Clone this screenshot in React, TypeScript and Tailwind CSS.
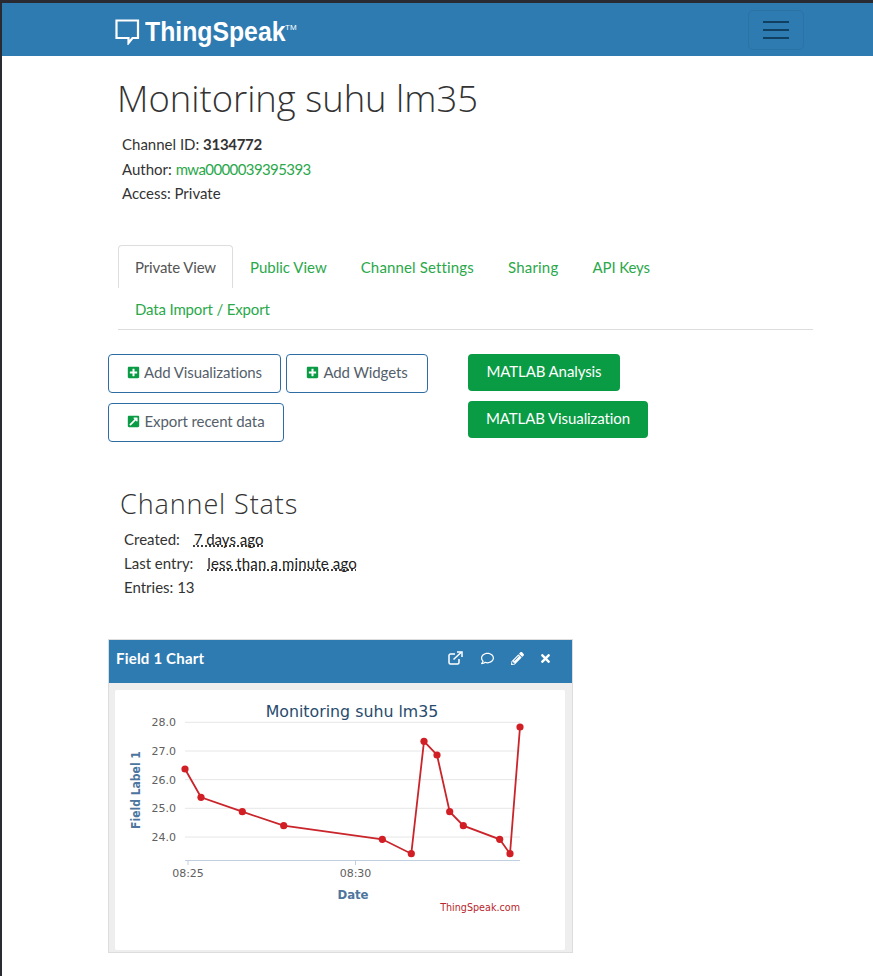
import React from 'react';
import { FaPlusSquare, FaExternalLinkSquareAlt, FaRegComment, FaPencilAlt, FaTimes } from 'react-icons/fa';

const body = "font-['Lato','Noto_Sans',sans-serif]";
const heading = "font-['Open_Sans','Lato',sans-serif]";

const points = [
  [70, 79], [86, 107.3], [127.3, 121.7], [168.7, 135.7], [267.3, 149.3], [296.3, 163.7],
  [309, 51.3], [322, 65], [334.7, 121.7], [348.3, 135.7], [384.7, 149.3], [395, 163.7], [405, 37],
];

const Logo = () => (
  <svg width="25" height="26" viewBox="0 0 25 26" fill="none" stroke="white" strokeWidth="2.2">
    <path d="M1.5 1.5 H23 V19 H17.5 L13.5 24 V19 H1.5 Z" />
  </svg>
);

const Chart = () => (
  <svg width="450" height="260" viewBox="0 0 450 260">
    {[32.3, 61, 89.7, 118.3, 147].map(y => (
      <line key={y} x1="70" x2="405" y1={y} y2={y} stroke="#e6e6e6" />
    ))}
    <line x1="70" x2="405" y1="170.5" y2="170.5" stroke="#c0d0e0" />
    <line x1="73" x2="73" y1="170" y2="175" stroke="#c0d0e0" />
    <line x1="240.5" x2="240.5" y1="170" y2="175" stroke="#c0d0e0" />
    <g fontFamily="'DejaVu Sans', sans-serif">
      <text x="237" y="27" textAnchor="middle" fontSize="15.8" fill="#274b6d">Monitoring suhu lm35</text>
      {['28.0', '27.0', '26.0', '25.0', '24.0'].map((t, i) => (
        <text key={t} x="61" y={[36, 65, 94, 122, 151][i]} textAnchor="end" fontSize="11" fill="#606060">{t}</text>
      ))}
      <text x="73" y="187" textAnchor="middle" fontSize="11" fill="#606060">08:25</text>
      <text x="240.5" y="187" textAnchor="middle" fontSize="11" fill="#606060">08:30</text>
      <text x="405" y="221" textAnchor="end" fontSize="9.6" fill="#b8262c">ThingSpeak.com</text>
      <text x="238" y="209" textAnchor="middle" fontSize="13" fontWeight="700" fill="#4d759e" fontFamily="'DejaVu Sans Condensed', 'DejaVu Sans', sans-serif">Date</text>
      <text transform="translate(25 100) rotate(-90)" textAnchor="middle" fontSize="12" fontWeight="700" fill="#4d759e" fontFamily="'DejaVu Sans Condensed', 'DejaVu Sans', sans-serif">Field Label 1</text>
    </g>
    <polyline points={points.map(p => p.join(',')).join(' ')} fill="none" stroke="#c9252b" strokeWidth="1.8" />
    {points.map(([x, y], i) => <circle key={i} cx={x} cy={y} r="3.6" fill="#d11f25" />)}
  </svg>
);

// fa4 external-link, the fa5 set only has the solid one
const ExternalLink = () => (
  <svg className="mr-[3px]" width="15" height="14" viewBox="0 0 15 14" fill="none" stroke="white" strokeWidth="1.5">
    <path d="M11 8 V11.5 A1.5 1.5 0 0 1 9.5 13 H2.5 A1.5 1.5 0 0 1 1 11.5 V4.5 A1.5 1.5 0 0 1 2.5 3 H7" />
    <path d="M5.5 8.5 L13 1.5" />
    <path d="M9 1 H14 V6" />
  </svg>
);

const OutlineBtn = ({ icon, label, className }: { icon: React.ReactNode; label: string; className: string }) => (
  <button className={`h-[39px] pb-[1px] flex items-center justify-center gap-[4px] border border-[#2e6da4] rounded-[4px] text-[#555f6b] text-[15px] tracking-[-0.1px] font-['Lato',sans-serif] ${className}`}>
    <span className="text-[#0a9b45] text-[13px]">{icon}</span>{label}
  </button>
);

const GreenBtn = ({ label, className }: { label: string; className: string }) => (
  <button className={`h-[37px] pb-[1px] flex items-center justify-center bg-[#0a9b45] rounded-[4px] text-white text-[15px] tracking-[-0.1px] font-['Lato',sans-serif] ${className}`}>{label}</button>
);

const Tab = ({ label, className = '' }: { label: string; className?: string }) => (
  <a className={`h-[43px] pt-[2px] px-[17px] flex items-center text-[#2aa84a] text-[15px] ${className}`}>{label}</a>
);

export default function App() {
  return (
    <div className={`min-h-[976px] bg-white border-l-2 border-t-[3px] border-[#2a2a33] overflow-hidden ${body}`}>
      <nav className="h-[53px] bg-[#2e7bb2] flex items-center justify-between pl-[113px] pr-[69px]">
        <div className="flex items-center text-white pt-[5px]">
          <Logo />
          <span className="ml-[5px] inline-block w-[139px] origin-left scale-x-[0.885] font-['Liberation_Sans',sans-serif] font-bold text-[28px] leading-[30px] whitespace-nowrap -mt-[1px] mr-[17px]">ThingSpeak</span>
          <span className="-ml-[16px] text-[8px] -mt-[8px] font-['Liberation_Sans',sans-serif]">TM</span>
        </div>
        <button className="w-[56px] h-[40px] rounded-[5px] border border-[#2b72a5] flex flex-col items-center justify-center gap-[6px]">
          <span className="w-[26px] h-[2px] bg-[#103f60]" />
          <span className="w-[26px] h-[2px] bg-[#103f60]" />
          <span className="w-[26px] h-[2px] bg-[#103f60]" />
        </button>
      </nav>

      <main className="pl-[106px] text-[#333]">
        <div className="pl-[9px] pt-[19px]">
          <h1 className={`text-[36.4px] leading-[46px] font-light text-[#333] ${heading}`}>Monitoring suhu lm35</h1>
          <div className="mt-[11px] pl-[5px] text-[15px] leading-[24.5px]">
            <p>Channel ID: <b className="tracking-[-0.3px]">3134772</b></p>
            <p>Author: <a className="text-[#2aa84a] tracking-[-0.6px]">mwa0000039395393</a></p>
            <p>Access: Private</p>
          </div>
        </div>

        <div className="ml-[10px] mt-[39px] w-[695px] border-b border-[#ddd] flex flex-wrap box-content">
          <a className="px-[16px] h-[43px] pt-[2px] flex items-center text-[#555] text-[15px] tracking-[-0.15px] border border-b-0 border-[#ddd] rounded-t-[4px]">Private View</a>
          <Tab label="Public View" />
          <Tab label="Channel Settings" className="tracking-[0.15px]" />
          <Tab label="Sharing" className="tracking-[0.2px]" />
          <Tab label="API Keys" className="tracking-[-0.1px]" />
          <div className="w-full" />
          <Tab label="Data Import / Export" className="!h-[41px] tracking-[-0.15px]" />
        </div>

        <div className="mt-[24px] flex">
          <div className="w-[360px] flex flex-wrap gap-x-[5px] gap-y-[10px] content-start">
            <OutlineBtn icon={<FaPlusSquare />} label="Add Visualizations" className="w-[173px]" />
            <OutlineBtn icon={<FaPlusSquare />} label="Add Widgets" className="w-[142px]" />
            <OutlineBtn icon={<FaExternalLinkSquareAlt />} label="Export recent data" className="w-[176px]" />
          </div>
          <div className="flex flex-col gap-[10px] items-start">
            <GreenBtn label="MATLAB Analysis" className="w-[152px]" />
            <GreenBtn label="MATLAB Visualization" className="w-[180px]" />
          </div>
        </div>

        <div className="mt-[46px] pl-[12px]">
          <h2 className={`text-[27px] leading-[32px] tracking-[0.9px] font-light text-[#333] ${heading}`}>Channel Stats</h2>
          <div className="mt-[7px] pl-[4px] text-[15px] leading-[24px]">
            <p>Created: <span className="ml-[10px] underline decoration-dotted decoration-black [text-decoration-skip-ink:none] text-[#222]">7 days ago</span></p>
            <p>Last entry: <span className="ml-[10px] underline decoration-dotted decoration-black [text-decoration-skip-ink:none] text-[#222] tracking-[0.15px]">less than a minute ago</span></p>
            <p>Entries: 13</p>
          </div>
        </div>

        <section className="mt-[40px] w-[465px] h-[314px] border border-[#ddd] bg-[#eeeeee]">
          <header className="h-[43px] pb-[6px] bg-[#2e7bb2] flex items-center justify-between pl-[7px] pr-[20px] text-white">
            <span className="font-bold text-[15px] tracking-[0.2px]">Field 1 Chart</span>
            <div className="flex items-center gap-[15px] text-[13px]">
              <ExternalLink />
              <FaRegComment className="mr-[2px]" />
              <FaPencilAlt />
              <FaTimes />
            </div>
          </header>
          <div className="mx-[6px] mt-[7px] w-[450px] h-[260px] bg-white rounded-[2px]">
            <Chart />
          </div>
        </section>
      </main>
    </div>
  );
}
